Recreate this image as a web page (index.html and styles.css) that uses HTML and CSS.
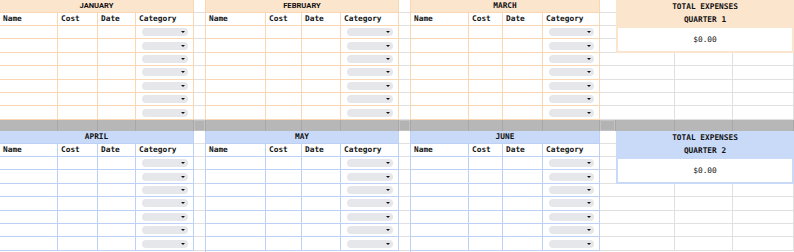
FILE: index.html
```html
<!DOCTYPE html>
<html>
<head>
<meta charset="utf-8">
<link rel="stylesheet" href="styles.css">
</head>
<body>
<div class="sheet">
  <div class="quarter orange">
    <div class="month m1">
      <div class="title prop">JANUARY</div>
      <div class="hd">Name</div><div class="hd">Cost</div><div class="hd">Date</div><div class="hd">Category</div>
      <div></div><div></div><div></div><div class="cat"><i class="chip"></i></div>
      <div></div><div></div><div></div><div class="cat"><i class="chip"></i></div>
      <div></div><div></div><div></div><div class="cat"><i class="chip"></i></div>
      <div></div><div></div><div></div><div class="cat"><i class="chip"></i></div>
      <div></div><div></div><div></div><div class="cat"><i class="chip"></i></div>
      <div></div><div></div><div></div><div class="cat"><i class="chip"></i></div>
      <div></div><div></div><div></div><div class="cat"><i class="chip"></i></div>
    </div>
    <div class="gap g12"><div></div><div></div><div></div><div></div><div></div><div></div><div></div><div></div><div></div></div>
    <div class="month m2 edge">
      <div class="title prop">FEBRUARY</div>
      <div class="hd">Name</div><div class="hd">Cost</div><div class="hd">Date</div><div class="hd">Category</div>
      <div></div><div></div><div></div><div class="cat"><i class="chip"></i></div>
      <div></div><div></div><div></div><div class="cat"><i class="chip"></i></div>
      <div></div><div></div><div></div><div class="cat"><i class="chip"></i></div>
      <div></div><div></div><div></div><div class="cat"><i class="chip"></i></div>
      <div></div><div></div><div></div><div class="cat"><i class="chip"></i></div>
      <div></div><div></div><div></div><div class="cat"><i class="chip"></i></div>
      <div></div><div></div><div></div><div class="cat"><i class="chip"></i></div>
    </div>
    <div class="gap g12"><div></div><div></div><div></div><div></div><div></div><div></div><div></div><div></div><div></div></div>
    <div class="month m3 edge">
      <div class="title">MARCH</div>
      <div class="hd">Name</div><div class="hd">Cost</div><div class="hd">Date</div><div class="hd">Category</div>
      <div></div><div></div><div></div><div class="cat"><i class="chip"></i></div>
      <div></div><div></div><div></div><div class="cat"><i class="chip"></i></div>
      <div></div><div></div><div></div><div class="cat"><i class="chip"></i></div>
      <div></div><div></div><div></div><div class="cat"><i class="chip"></i></div>
      <div></div><div></div><div></div><div class="cat"><i class="chip"></i></div>
      <div></div><div></div><div></div><div class="cat"><i class="chip"></i></div>
      <div></div><div></div><div></div><div class="cat"><i class="chip"></i></div>
    </div>
    <div class="gap g16"><div></div><div></div><div></div><div></div><div></div><div></div><div></div><div></div><div></div></div>
    <div class="totals">
      <div class="tt">TOTAL EXPENSES</div>
      <div class="tt">QUARTER 1</div>
      <div class="val">$0.00</div>
      <div class="c"></div><div class="c"></div><div class="c"></div>
      <div class="c"></div><div class="c"></div><div class="c"></div>
      <div class="c"></div><div class="c"></div><div class="c"></div>
      <div class="c"></div><div class="c"></div><div class="c"></div>
      <div class="c"></div><div class="c"></div><div class="c"></div>
    </div>
  </div>

  <div class="divider">
    <div></div><div></div><div></div><div></div><div class="sp"></div>
    <div></div><div></div><div></div><div></div><div class="sp"></div>
    <div></div><div></div><div></div><div></div><div class="sp"></div>
    <div></div><div></div><div></div>
  </div>

  <div class="quarter blue">
    <div class="month m1">
      <div class="title">APRIL</div>
      <div class="hd">Name</div><div class="hd">Cost</div><div class="hd">Date</div><div class="hd">Category</div>
      <div></div><div></div><div></div><div class="cat"><i class="chip"></i></div>
      <div></div><div></div><div></div><div class="cat"><i class="chip"></i></div>
      <div></div><div></div><div></div><div class="cat"><i class="chip"></i></div>
      <div></div><div></div><div></div><div class="cat"><i class="chip"></i></div>
      <div></div><div></div><div></div><div class="cat"><i class="chip"></i></div>
      <div></div><div></div><div></div><div class="cat"><i class="chip"></i></div>
      <div></div><div></div><div></div><div class="cat"><i class="chip"></i></div>
    </div>
    <div class="gap g12"><div></div><div></div><div></div><div></div><div></div><div></div><div></div><div></div><div></div></div>
    <div class="month m2 edge">
      <div class="title">MAY</div>
      <div class="hd">Name</div><div class="hd">Cost</div><div class="hd">Date</div><div class="hd">Category</div>
      <div></div><div></div><div></div><div class="cat"><i class="chip"></i></div>
      <div></div><div></div><div></div><div class="cat"><i class="chip"></i></div>
      <div></div><div></div><div></div><div class="cat"><i class="chip"></i></div>
      <div></div><div></div><div></div><div class="cat"><i class="chip"></i></div>
      <div></div><div></div><div></div><div class="cat"><i class="chip"></i></div>
      <div></div><div></div><div></div><div class="cat"><i class="chip"></i></div>
      <div></div><div></div><div></div><div class="cat"><i class="chip"></i></div>
    </div>
    <div class="gap g12"><div></div><div></div><div></div><div></div><div></div><div></div><div></div><div></div><div></div></div>
    <div class="month m3 edge">
      <div class="title">JUNE</div>
      <div class="hd">Name</div><div class="hd">Cost</div><div class="hd">Date</div><div class="hd">Category</div>
      <div></div><div></div><div></div><div class="cat"><i class="chip"></i></div>
      <div></div><div></div><div></div><div class="cat"><i class="chip"></i></div>
      <div></div><div></div><div></div><div class="cat"><i class="chip"></i></div>
      <div></div><div></div><div></div><div class="cat"><i class="chip"></i></div>
      <div></div><div></div><div></div><div class="cat"><i class="chip"></i></div>
      <div></div><div></div><div></div><div class="cat"><i class="chip"></i></div>
      <div></div><div></div><div></div><div class="cat"><i class="chip"></i></div>
    </div>
    <div class="gap g16"><div></div><div></div><div></div><div></div><div></div><div></div><div></div><div></div><div></div></div>
    <div class="totals">
      <div class="tt">TOTAL EXPENSES</div>
      <div class="tt">QUARTER 2</div>
      <div class="val">$0.00</div>
      <div class="c"></div><div class="c"></div><div class="c"></div>
      <div class="c"></div><div class="c"></div><div class="c"></div>
      <div class="c"></div><div class="c"></div><div class="c"></div>
      <div class="c"></div><div class="c"></div><div class="c"></div>
      <div class="c"></div><div class="c"></div><div class="c"></div>
    </div>
  </div>
</div>
</body>
</html>
```

FILE: styles.css
```css
* { box-sizing: border-box; margin: 0; padding: 0; }

body {
  margin: 0;
  width: 794px;
  height: 252px;
  overflow: hidden;
  background: #ffffff;
  font-family: "DejaVu Sans Mono", "Liberation Mono", monospace;
  font-size: 7.8px;
  color: #111111;
}

.sheet {
  display: flex;
  flex-direction: column;
  width: 794px;
}

.orange { --fill: #fce5cd; --line: #f9d7b3; }
.blue { --fill: #c9daf8; --line: #bcd1f5; }

.quarter {
  display: flex;
  height: 119.5px;
}

.quarter.blue { height: 122px; }

.month {
  display: grid;
  grid-template-rows: 13px 13px repeat(7, 13.4px);
}

.m1 { grid-template-columns: 58px 40px 38px 58px; }
.m2 { grid-template-columns: 60px 36px 39px 58px; }
.m3 { grid-template-columns: 58px 34px 40px 57px; }

.month.edge { border-left: 1px solid var(--line); }

.month > div {
  border-right: 1px solid var(--line);
  border-bottom: 1px solid var(--line);
}

.title {
  grid-column: 1 / -1;
  background: var(--fill);
  font-weight: bold;
  text-align: center;
  line-height: 12px;
}

.prop {
  font-family: Roboto, "Liberation Sans", sans-serif;
  font-size: 7.6px;
}

.hd {
  font-weight: bold;
  padding-left: 3px;
  line-height: 12px;
  white-space: nowrap;
  overflow: hidden;
}

.cat {
  display: flex;
  align-items: center;
  padding: 0 5px 0 6px;
}

.chip {
  display: block;
  flex: 1;
  height: 8px;
  border-radius: 4px;
  background: #e6e7ea;
  position: relative;
}

.chip::after {
  content: "";
  position: absolute;
  right: 3px;
  top: 3px;
  border-left: 2px solid transparent;
  border-right: 2px solid transparent;
  border-top: 2.5px solid #111111;
}

.gap {
  display: grid;
  grid-template-rows: 13px 13px repeat(7, 13.4px);
}

.g12 { width: 11px; }
.g16 { width: 16px; }

.gap > div { border-bottom: 1px solid #e0e0e0; }

.totals {
  width: 178px;
  display: grid;
  grid-template-columns: 59px 58px 61px;
  grid-template-rows: 13px 13px 26.8px repeat(5, 13.4px);
}

.tt {
  grid-column: 1 / -1;
  background: var(--fill);
  font-weight: bold;
  text-align: center;
  line-height: 13px;
  white-space: pre;
}

.val {
  grid-column: 1 / -1;
  border: 2px solid var(--fill);
  display: flex;
  align-items: center;
  justify-content: center;
}

.totals > .c {
  border-right: 1px solid #e0e0e0;
  border-bottom: 1px solid #e0e0e0;
}

.divider {
  display: grid;
  grid-template-columns: 58px 40px 38px 58px 12px 60px 36px 39px 58px 12px 58px 34px 40px 57px 16px 59px 58px 61px;
  height: 11.5px;
  background: #b7b7b7;
}

.divider > div { border-right: 1px solid #a8a8a8; }
.divider > .sp { background: #b3b3b3; box-shadow: inset 0 0 0 1px #c2c2c2; }
```
